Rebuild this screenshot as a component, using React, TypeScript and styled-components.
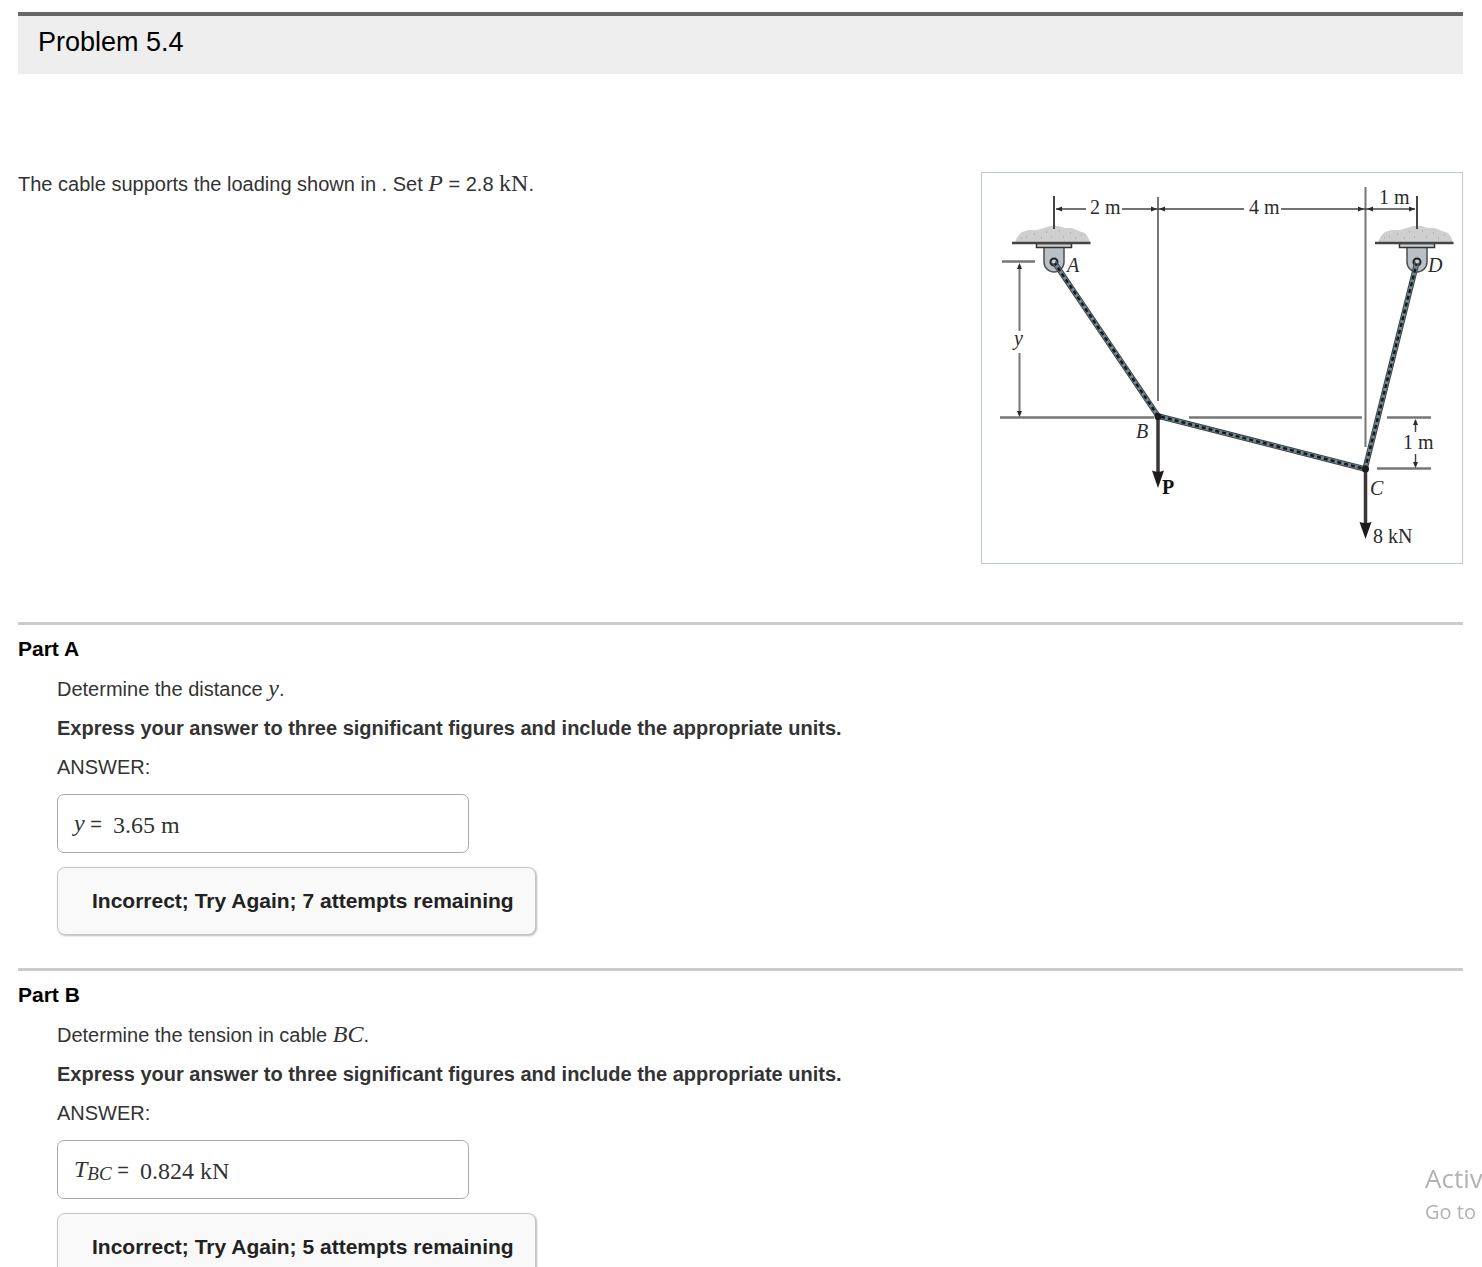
import React from "react";
import styled, { createGlobalStyle } from "styled-components";

const SANS = `"Liberation Sans", Arial, sans-serif`;
const MATH = `"Liberation Serif", "Times New Roman", serif`;

const GlobalStyle = createGlobalStyle`
  *, *::before, *::after { box-sizing: border-box; }
  body {
    margin: 0;
    background: #fff;
    color: #333;
    font-family: ${SANS};
    font-size: 20px;
    line-height: 25px;
  }
  h1, h2, p { margin: 0; }
`;

const Page = styled.main`
  height: 100vh;
  overflow: hidden;
  padding: 12px 19px 0 18px;
`;

const Header = styled.header`
  border-top: 4px solid #666;
  background: #eee;
  padding: 10px 20px 16px;
`;

const Title = styled.h1`
  color: #000;
  font-size: 27px;
  font-weight: 400;
  line-height: 32px;
`;

const Intro = styled.section`
  display: flex;
  align-items: flex-start;
  justify-content: space-between;
  gap: 32px;
  padding: 98px 0 58px;
`;

const Figure = styled.figure`
  flex: none;
  margin: 0;
  border: 1px solid #bcc8cf;
`;

const Part = styled.section`
  border-top: 3px solid #ccc;
  padding: 12px 0 33px;
`;

const PartTitle = styled.h2`
  color: #000;
  font-size: 21px;
  line-height: 24px;
`;

const PartBody = styled.div`
  display: flex;
  flex-direction: column;
  align-items: flex-start;
  gap: 14px;
  padding: 16px 0 0 39px;
`;

const Text = styled.p<{ $bold?: boolean }>`
  font-size: 20px;
  font-weight: ${(p) => (p.$bold ? 700 : 400)};
  line-height: 25px;
`;

const Var = styled.var`
  font-family: ${MATH};
  font-size: 24px;
  line-height: 0;
`;

const Unit = styled.span`
  font-family: ${MATH};
  font-size: 24px;
  line-height: 0;
`;

const Answer = styled.div`
  display: flex;
  align-items: center;
  gap: 11px;
  width: 412px;
  height: 59px;
  padding: 2px 16px 0;
  border: 1px solid #aaa;
  border-radius: 7px;
  background: #fff;
`;

const AnswerLabel = styled.label`
  flex: none;
  font-size: 20px;
  line-height: 25px;
`;

const Sub = styled.sub`
  font-size: 19px;
  line-height: 0;
  vertical-align: -3px;
`;

const AnswerInput = styled.input`
  flex: 1;
  min-width: 0;
  padding: 0;
  border: 0;
  outline: 0;
  background: transparent;
  color: #333;
  font-family: ${MATH};
  font-size: 24px;
  line-height: 28px;
`;

const Feedback = styled.div`
  padding: 21px 21px 21px 34px;
  border: 1px solid #c4c4c4;
  border-radius: 8px;
  background: #f9f9f9;
  box-shadow: 1px 1px 2px #bbb;
  color: #222;
  font-size: 21px;
  font-weight: 700;
  line-height: 24px;
`;

const Watermark = styled.aside`
  position: fixed;
  right: 0;
  bottom: 39px;
  width: 57px;
  color: #b2b2b2;
  font-family: "Open Sans", "Noto Sans", sans-serif;
  white-space: nowrap;
`;

const WatermarkTitle = styled.p`
  font-size: 26px;
  line-height: 36px;
`;

const WatermarkText = styled.p`
  font-size: 20px;
  line-height: 32px;
`;

const Drawing = styled.svg`
  display: block;
  text {
    font-family: ${MATH};
    font-size: 20px;
    fill: #2b2b2b;
  }
  .italic { font-style: italic; }
  .bold { font-weight: 700; fill: #111; }
`;

/** Ceiling mount with its bracket and pin, centred on x. */
function Support({ x }: { x: number }) {
  return (
    <g transform={`translate(${x} 0)`}>
      <path
        d="M-39 70 L-36 64 L-32 60 L-25 58 L-17 58 L-10 56 L-4 54 L4 54 L11 56 L18 56 L25 59 L31 61 L34 65 L36 70 Z"
        fill="#cfcfcf"
      />
      <path
        d="M-28 65h1M-20 62h1M-13 66h1M-8 60h1M-3 65h1M5 59h1M9 65h1M16 61h1M21 66h1M27 63h1M-33 66h1"
        stroke="#aaa"
        strokeWidth="1.5"
      />
      <path d="M-10 75 V90 A10 10 0 0 0 10 90 V75 Z" fill="#b9c1c7" stroke="#4b4f52" strokeWidth="1.5" />
      <rect x="-17.5" y="71.5" width="35" height="4" fill="#c9d0d5" stroke="#333" strokeWidth="1.5" />
      <path d="M-42 71H36.5" stroke="#444" strokeWidth="2.5" />
      <circle cx="0" cy="90" r="3.5" fill="#c9d0d5" stroke="#222" strokeWidth="2" />
    </g>
  );
}

type Dir = "left" | "right" | "up" | "down";
const ANGLE: Record<Dir, number> = { right: 0, down: 90, left: 180, up: 270 };

function Tip({ x, y, dir }: { x: number; y: number; dir: Dir }) {
  return <path transform={`translate(${x} ${y}) rotate(${ANGLE[dir]})`} d="M0 0L-6 -2.5V2.5Z" fill="#2b2b2b" />;
}

const CABLE = "M73 90L177 244L384 297L436 90";

function CableDiagram() {
  return (
    <Drawing width="480" height="390" viewBox="1 1 480 390" role="img" aria-label="Cable ABCD with loads P and 8 kN">
      <g stroke="#777" strokeWidth="2" fill="none">
        <path d="M177 25V229M384.500 15V275" />
        <path d="M21 89.5H54M19 245.5H173M208 245.5H381M406 245.5H450M396 296.5H450" strokeWidth="2.5" />
        <path d="M38.5 93V159M38.5 181V243" />
      </g>
      <g stroke="#444" strokeWidth="1.5" fill="none">
        <path d="M75 37H105M141 37H263M300 37H434" />
        <path d="M434.5 248V260M434.5 282V294" />
      </g>
      <Tip x={75} y={37} dir="left" />
      <Tip x={176} y={37} dir="right" />
      <Tip x={178} y={37} dir="left" />
      <Tip x={383} y={37} dir="right" />
      <Tip x={386} y={37} dir="left" />
      <Tip x={434} y={37} dir="right" />
      <Tip x={38.5} y={91} dir="up" />
      <Tip x={38.5} y={245} dir="down" />
      <Tip x={434.5} y={247} dir="up" />
      <Tip x={434.5} y={296} dir="down" />

      <Support x={73} />
      <Support x={436} />
      <path d="M73 24V57M436 24V57" stroke="#444" strokeWidth="2" />

      <g fill="none" strokeLinejoin="round">
        <path d={CABLE} stroke="#3b464b" strokeWidth="5.5" />
        <path d={CABLE} stroke="#73868f" strokeWidth="3.5" />
        <path d={CABLE} stroke="#151a1c" strokeWidth="2.5" strokeDasharray="4 3" />
      </g>
      <circle cx="73" cy="90" r="1.5" fill="#c9d0d5" />
      <circle cx="436" cy="90" r="1.5" fill="#c9d0d5" />

      <path d="M177 244V300M384.5 297V352" stroke="#3a3638" strokeWidth="3.5" />
      <path d="M171 298.5Q177 301 183 298.5L177 316Z" fill="#1d1b1c" />
      <path d="M378.5 350Q384.5 352 390.5 350L384.5 367Z" fill="#1d1b1c" />
      <circle cx="177" cy="244.5" r="3.5" fill="#1d1b1c" />
      <circle cx="384.5" cy="297" r="3.5" fill="#1d1b1c" />

      <text x="109" y="42">2 m</text>
      <text x="268" y="42">4 m</text>
      <text x="398" y="32">1 m</text>
      <text x="422" y="277">1 m</text>
      <text x="392" y="371">8 kN</text>
      <text className="italic" x="86" y="100">A</text>
      <text className="italic" x="447" y="100">D</text>
      <text className="italic" x="155" y="266">B</text>
      <text className="italic" x="389" y="323">C</text>
      <text className="italic" x="33" y="173">y</text>
      <text className="bold" x="181" y="322">P</text>
    </Drawing>
  );
}

interface ProblemPartProps {
  id: string;
  title: string;
  question: React.ReactNode;
  label: React.ReactNode;
  value: string;
  attempts: number;
}

function ProblemPart({ id, title, question, label, value, attempts }: ProblemPartProps) {
  return (
    <Part>
      <PartTitle>{title}</PartTitle>
      <PartBody>
        <Text>{question}</Text>
        <Text $bold>Express your answer to three significant figures and include the appropriate units.</Text>
        <Text>ANSWER:</Text>
        <Answer>
          <AnswerLabel htmlFor={id}>{label} =</AnswerLabel>
          <AnswerInput id={id} defaultValue={value} readOnly />
        </Answer>
        <Feedback>Incorrect; Try Again; {attempts} attempts remaining</Feedback>
      </PartBody>
    </Part>
  );
}

export default function App() {
  return (
    <>
      <GlobalStyle />
      <Page>
        <Header>
          <Title>Problem 5.4</Title>
        </Header>
        <Intro>
          <Text>
            The cable supports the loading shown in . Set <Var>P</Var> = 2.8 <Unit>kN</Unit>.
          </Text>
          <Figure>
            <CableDiagram />
          </Figure>
        </Intro>
        <ProblemPart
          id="answer-a"
          title="Part A"
          question={<>Determine the distance <Var>y</Var>.</>}
          label={<Var>y</Var>}
          value="3.65 m"
          attempts={7}
        />
        <ProblemPart
          id="answer-b"
          title="Part B"
          question={<>Determine the tension in cable <Var>BC</Var>.</>}
          label={<Var>T<Sub>BC</Sub></Var>}
          value="0.824 kN"
          attempts={5}
        />
      </Page>
      <Watermark>
        <WatermarkTitle>Activ</WatermarkTitle>
        <WatermarkText>Go to</WatermarkText>
      </Watermark>
    </>
  );
}
